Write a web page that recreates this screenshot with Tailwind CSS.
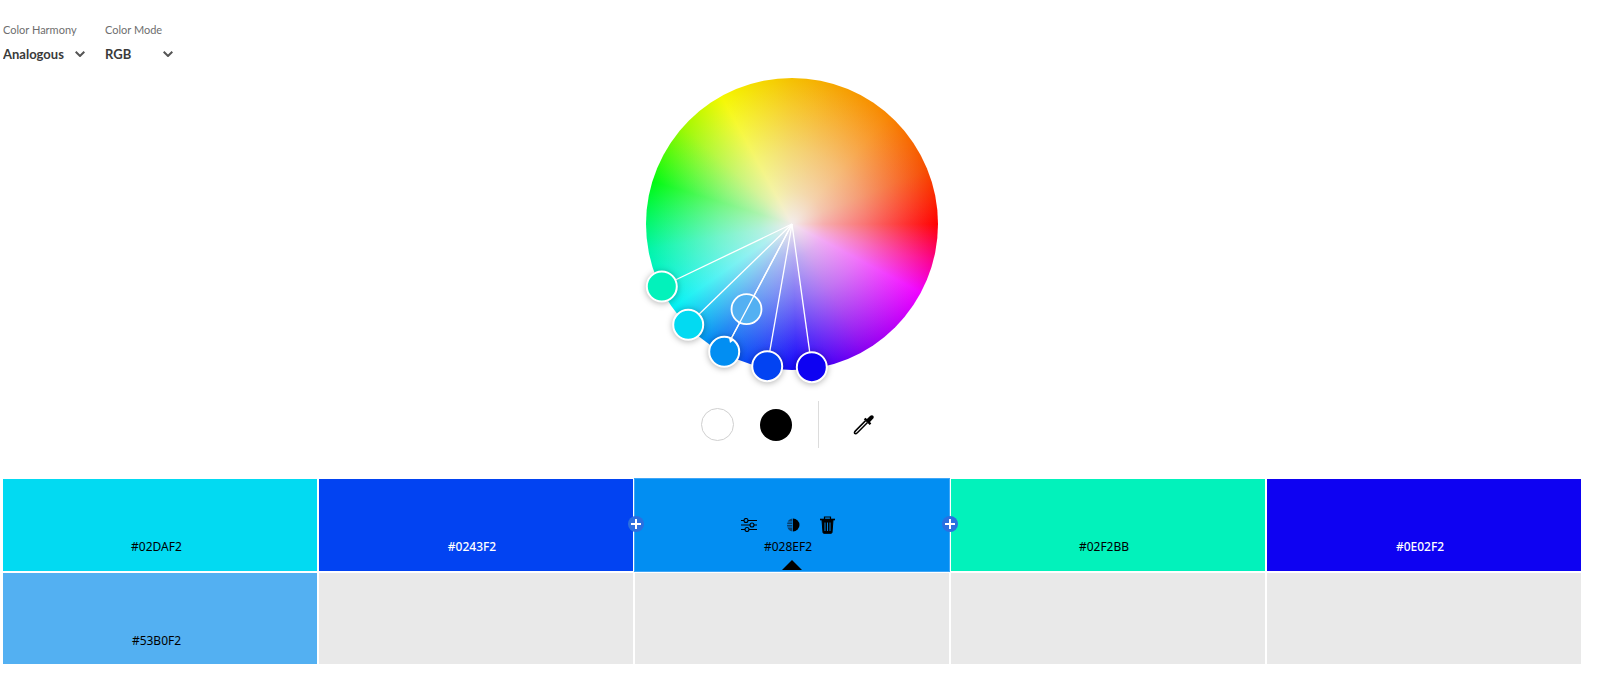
<!DOCTYPE html>
<html lang="en">
  <head>
    <meta charset="UTF-8" />
    <meta name="viewport" content="width=device-width, initial-scale=1.0" />
    <title>Color Wheel</title>
    <script src="https://cdn.jsdelivr.net/npm/@tailwindcss/browser@4"></script>
  </head>
  <body class="bg-white font-['Lato','Noto_Sans',sans-serif]">
    <main class="w-[1578px] ml-[3px] h-[685px] overflow-hidden">
      <!-- Harmony / mode selects -->
      <div class="flex h-[78px] pt-[22px]">
        <div class="w-[102px]">
          <p class="text-[11px] leading-4 text-[#6e6e6e]">Color Harmony</p>
          <div class="flex items-center mt-2 h-4 w-[82px] justify-between">
            <span class="text-[13px] leading-4 font-bold text-[#3a3a3a]">Analogous</span>
            <svg width="10" height="6" viewBox="0 0 10 6" fill="none" stroke="#555" stroke-width="2"><path d="M0.7 0.7 5 5 9.3 0.7" /></svg>
          </div>
        </div>
        <div class="w-[68px]">
          <p class="text-[11px] leading-4 text-[#6e6e6e]">Color Mode</p>
          <div class="flex items-center mt-2 h-4 justify-between">
            <span class="text-[13px] leading-4 font-bold text-[#3a3a3a]">RGB</span>
            <svg width="10" height="6" viewBox="0 0 10 6" fill="none" stroke="#555" stroke-width="2"><path d="M0.7 0.7 5 5 9.3 0.7" /></svg>
          </div>
        </div>
      </div>

      <!-- Wheel -->
      <div class="relative w-[292px] h-[292px] mx-auto rounded-full bg-[conic-gradient(#f5c000_0deg,#f6a400_18deg,#f88400_42deg,#f64c00_68deg,#ff0000_90deg,#fb0090_105deg,#f000ff_118deg,#8a00f0_150deg,#1400f8_178deg,#0a3cf5_195deg,#0078f2_212deg,#00f0f2_235deg,#00f5a8_260deg,#00fa10_287deg,#a0f800_312deg,#f5f800_331deg,#f5c000_360deg)]">
        <div class="absolute inset-0 rounded-full bg-[radial-gradient(circle_closest-side,rgba(243,236,236,1)_0%,rgba(243,240,240,.72)_22%,rgba(243,243,243,.48)_50%,rgba(250,250,250,.2)_78%,rgba(255,255,255,0)_100%)]"></div>
        <svg class="absolute inset-0 overflow-visible" width="292" height="292" viewBox="0 0 292 292" fill="none">
          <g stroke="#fff" stroke-width="1.3">
            <path d="M146 146 15.8 208.5" />
            <path d="M146 146 42.2 246.8" />
            <path d="M146 146 78.2 273.8" />
            <path d="M146 146 121.2 288.2" />
            <path d="M146 146 165.8 289.2" />
          </g>
          <circle cx="100.5" cy="231.2" r="15" fill="#53b0f2" stroke="#fff" stroke-width="1.8" />
          <path d="M146 146 78.2 273.8" stroke="#fff" stroke-width="1.3" />
          <g stroke="#fff" stroke-width="2" class="drop-shadow-[0_1px_3px_rgba(0,0,0,0.3)]">
            <circle cx="15.8" cy="208.5" r="15" fill="#02f2bb" />
            <circle cx="42.2" cy="246.8" r="15" fill="#02daf2" />
            <circle cx="78.2" cy="273.8" r="15" fill="#028ef2" />
            <circle cx="121.2" cy="288.2" r="15" fill="#0243f2" />
            <circle cx="165.8" cy="289.2" r="15" fill="#0e02f2" />
          </g>
          <path d="M83 259.5 88 262 84 265Z" fill="#fff" />
        </svg>
      </div>

      <!-- White / black / eyedropper -->
      <div class="flex items-center h-[47px] mt-[31px] ml-[698px]">
        <div class="w-[33px] h-[33px] rounded-full bg-white border border-[#d0d0d0]"></div>
        <div class="w-[32px] h-[32px] rounded-full bg-black ml-[26px]"></div>
        <div class="w-px h-[47px] bg-[#dcdcdc] ml-[26px]"></div>
        <svg class="ml-[33px]" width="24" height="24" viewBox="0 0 24 24">
          <path d="M13.6 7.6 3.7 17.6c-1 1-1.4 2.4-1 2.9.6.5 1.9 0 2.9-1l9.9-10" fill="#fff" stroke="#000" stroke-width="1.5" stroke-linejoin="round" />
          <path d="M11.8 6.2 13.5 4.8 14.9 6.1 18.3 2.7c1-.9 2.6-.6 3.1.2.6.9.4 2.1-.4 2.9L18 9l1.3 1.5-1.6 1.6Z" fill="#000" />
        </svg>
      </div>

      <!-- Swatches -->
      <div class="grid grid-cols-5 grid-rows-[92px_91px] gap-[2px] mt-[31px] text-[12px] leading-4 text-center font-['Noto_Sans',sans-serif]">
        <div class="bg-[#02daf2] text-black pt-[60px] pr-[7px]">#02DAF2</div>
        <div class="bg-[#0243f2] text-white font-medium pt-[60px] pr-[8px]">#0243F2</div>
        <div class="relative z-10 -mt-px -mb-px -mx-px bg-[#028ef2] border border-[#3ea6f7] text-black">
          <div class="flex items-center h-[20px] mt-[36px] pl-[106px]">
            <svg width="16" height="14" viewBox="0 0 16 14" fill="none" stroke="#000" stroke-width="1.1">
              <path d="M0 2.5H3M7 2.5H16M0 7H9M13 7H16M0 11.5H4M8 11.5H16" />
              <circle cx="5" cy="2.5" r="2" />
              <circle cx="11" cy="7" r="2" />
              <circle cx="6" cy="11.5" r="2" />
            </svg>
            <svg class="ml-[29px]" width="14" height="14" viewBox="0 0 14 14">
              <path d="M7 .5a6.5 6.5 0 0 1 0 13Z" fill="#000" />
              <path d="M6.4.6A6.5 6.5 0 0 0 6.4 13.4Z" fill="#0a3f6e" />
              <path d="M1 4H6.5M.5 6.5H6.5M.6 9H6.5" stroke="#028ef2" stroke-width=".8" />
            </svg>
            <svg class="ml-[20px]" width="15" height="18" viewBox="0 0 15 18" fill="none" stroke="#000">
              <path d="M0 3.5H15" stroke-width="1.6" />
              <path d="M4.5 3V1h6v2" stroke-width="1.2" />
              <path d="M2 4 3 16.5c0 .5.4.8.9.8h7.2c.5 0 .9-.3.9-.8L13 4Z" fill="#000" stroke-width="1" />
              <path d="M5 6.5V15M7.5 6.5V15M10 6.5V15" stroke="#028ef2" stroke-width=".9" />
            </svg>
          </div>
          <div class="mt-[4px] pr-[8px]">#028EF2</div>
          <svg class="absolute left-1/2 -translate-x-1/2 bottom-[1px]" width="20" height="10" viewBox="0 0 20 10"><path d="M10 0 20 10H0Z" fill="#000" /></svg>
          <span class="absolute left-[-7px] top-[37px] flex items-center justify-center w-4 h-4 rounded-full bg-[#2b6fe0]">
            <svg width="10" height="10" viewBox="0 0 10 10" stroke="#fff" stroke-width="2"><path d="M5 0V10M0 5H10" /></svg>
          </span>
          <span class="absolute right-[-9px] top-[37px] flex items-center justify-center w-4 h-4 rounded-full bg-[#2b6fe0]">
            <svg width="10" height="10" viewBox="0 0 10 10" stroke="#fff" stroke-width="2"><path d="M5 0V10M0 5H10" /></svg>
          </span>
        </div>
        <div class="bg-[#02f2bb] text-black pt-[60px] pr-[8px]">#02F2BB</div>
        <div class="bg-[#0e02f2] text-white font-medium pt-[60px] pr-[8px]">#0E02F2</div>
        <div class="bg-[#53b0f2] text-black pt-[60px] pr-[7px]">#53B0F2</div>
        <div class="bg-[#e9e9e9]"></div>
        <div class="bg-[#e9e9e9]"></div>
        <div class="bg-[#e9e9e9]"></div>
        <div class="bg-[#e9e9e9]"></div>
      </div>
    </main>
  </body>
</html>
